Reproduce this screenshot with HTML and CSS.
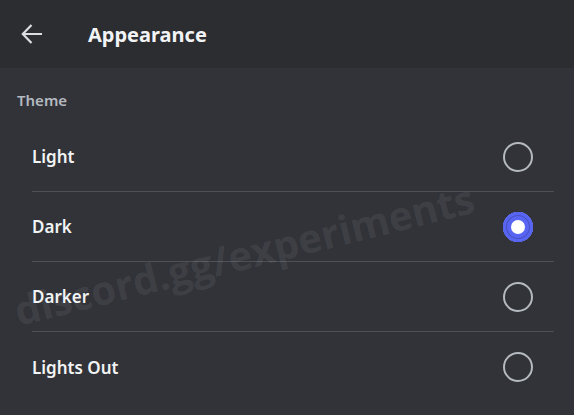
FILE: index.html
```html
<!DOCTYPE html>
<html lang="en">
<head>
    <meta charset="UTF-8">
    <meta name="viewport" content="width=device-width, initial-scale=1.0">
    <title>Appearance</title>
    <link rel="stylesheet" href="styles.css">
</head>
<body>
    <div class="screen">
        <header class="top-bar">
            <button class="back-btn" aria-label="Back">
                <svg width="24" height="24" viewBox="0 0 24 24">
                    <path d="M22 12H3.5M11.5 3L2.8 12l8.7 9" fill="none" stroke="#dbdee1" stroke-width="2.2"/>
                </svg>
            </button>
            <h1 class="title">Appearance</h1>
        </header>

        <main class="content">
            <div class="section-label">Theme</div>
            <ul class="options">
                <li class="option">
                    <span>Light</span>
                    <span class="radio"></span>
                </li>
                <li class="option">
                    <span>Dark</span>
                    <span class="radio checked"></span>
                </li>
                <li class="option">
                    <span>Darker</span>
                    <span class="radio"></span>
                </li>
                <li class="option">
                    <span>Lights Out</span>
                    <span class="radio"></span>
                </li>
            </ul>
        </main>

        <!-- watermark sits over everything -->
        <div class="watermark">discord.gg/experiments</div>
    </div>
</body>
</html>
```

FILE: styles.css
```css
* {
    box-sizing: border-box;
}

body {
    margin: 0;
    background: #313338;
    font-family: "Noto Sans", "Open Sans", sans-serif;
    color: #f2f3f5;
    overflow: hidden;
}

.screen {
    position: relative;
    width: 574px;
    height: 415px;
    overflow: hidden;
}

.top-bar {
    height: 68px;
    background: #2b2d31;
    display: flex;
    align-items: center;
    padding: 0 0 0 20px;
}

.back-btn {
    background: none;
    border: none;
    padding: 0;
    width: 24px;
    height: 24px;
    display: flex;
    cursor: pointer;
}

.title {
    margin: 0 0 0 44px;
    font-size: 20px;
    font-weight: 700;
    color: #f2f3f5;
}

.content {
    padding: 22px 20px 0 17px;
}

.section-label {
    font-size: 15px;
    font-weight: 600;
    color: #b5bac1;
    line-height: 20px;
}

.options {
    list-style: none;
    margin: 12px 0 0;
    padding: 0 0 0 15px;
}

.option {
    height: 70px;
    display: flex;
    align-items: center;
    justify-content: space-between;
    font-size: 17px;
    font-weight: 600;
    color: #f2f3f5;
    border-bottom: 1px solid #4e5058;
    padding-right: 21px;
}

.option:last-child {
    border-bottom: none;
}

.radio {
    width: 30px;
    height: 30px;
    border-radius: 50%;
    border: 2px solid #b5bac1;
}

.radio.checked {
    border: none;
    background: #5865f2;
    box-shadow: inset 0 0 0 3px #5865f2, inset 0 0 0 4px #4752c4, inset 0 0 0 8px #5865f2, inset 0 0 0 15px #ffffff;
}

.watermark {
    position: absolute;
    left: 244px;
    top: 254px;
    transform: translate(-50%, -50%) rotate(-14deg);
    font-family: "Open Sans", sans-serif;
    font-weight: 700;
    font-size: 40px;
    color: rgba(255, 255, 255, 0.08);
    white-space: nowrap;
    pointer-events: none;
}
```
